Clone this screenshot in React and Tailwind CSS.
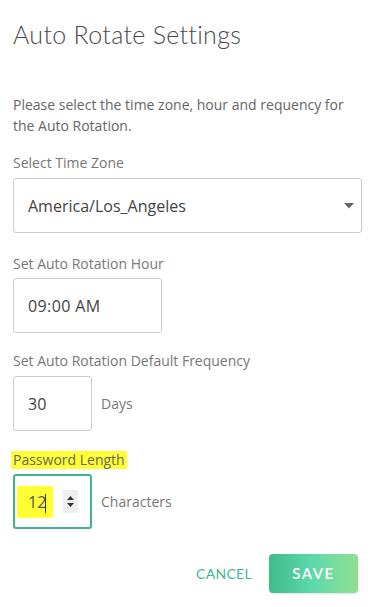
import React from 'react';

const Label = ({ children }) => (
  <div className="text-[14px] leading-[18px] text-[#777]">{children}</div>
);

export default function App() {
  return (
    <div className="w-[384px] h-[607px] bg-white font-['Open_Sans',sans-serif] text-[#555] pl-[13px] pr-[22px]">
      <h1 className="pt-[19px] text-[25px] leading-[30px] text-[#4a4a4a] font-['Lato',sans-serif] font-light tracking-[0.3px]">
        Auto Rotate Settings
      </h1>

      <p className="mt-[45px] text-[14px] leading-[21px] text-[#666]">
        Please select the time zone, hour and requency for the Auto Rotation.
      </p>

      <div className="mt-[18px]">
        <Label>Select Time Zone</Label>
        <div className="mt-[6px] h-[55px] w-[349px] border border-[#ccc] rounded-[3px] flex items-center justify-between pl-[14px] pr-[7px]">
          <span className="text-[16px] text-[#444]">America/Los_Angeles</span>
          <svg width="10" height="6" viewBox="0 0 10 6">
            <path d="M0 0h10L5 5.5z" fill="#666" />
          </svg>
        </div>
      </div>

      <div className="mt-[22px]">
        <Label>Set Auto Rotation Hour</Label>
        <div className="mt-[5px] h-[55px] w-[149px] border border-[#ccc] rounded-[3px] flex items-center pl-[14px]">
          <span className="text-[16px] text-[#444] tracking-[0.4px]">09:00 AM</span>
        </div>
      </div>

      <div className="mt-[19px]">
        <Label>Set Auto Rotation Default Frequency</Label>
        <div className="mt-[6px] flex items-center gap-[9px]">
          <div className="h-[55px] w-[79px] border border-[#ccc] rounded-[3px] flex items-center pl-[14px]">
            <span className="text-[16px] text-[#444]">30</span>
          </div>
          <span className="text-[14px] text-[#777]">Days</span>
        </div>
      </div>

      <div className="mt-[20px]">
        <div className="text-[14px] leading-[18px] text-[#666] bg-[#ffff33] w-fit -ml-[2px] px-[2px]">
          Password Length
        </div>
        <div className="mt-[5px] flex items-center gap-[9px]">
          <div className="h-[55px] w-[79px] border-2 border-[#3fb58f] rounded-[3px] flex items-center pl-[2px]">
            <span className="relative bg-[#ffff33] h-[32px] w-[36px] flex items-center pl-[11px] text-[16px] text-[#555] rounded-[2px]">
              12
              <span className="absolute left-[28px] top-[8px] w-px h-[19px] bg-[#333]" />
            </span>
            <div className="ml-[10px] w-[15px] h-[23px] bg-[#efefef] flex flex-col items-center justify-center gap-[3px]">
              <svg width="7" height="4" viewBox="0 0 7 4"><path d="M0 4h7L3.5 0z" fill="#333" /></svg>
              <svg width="7" height="4" viewBox="0 0 7 4"><path d="M0 0h7L3.5 4z" fill="#333" /></svg>
            </div>
          </div>
          <span className="text-[14px] text-[#777]">Characters</span>
        </div>
      </div>

      <div className="mt-[25px] flex items-center justify-end gap-[17px] pr-[4px]">
        <button className="text-[14px] text-[#3cb89a] font-['Lato',sans-serif] tracking-[0.3px]">CANCEL</button>
        <button className="h-[39px] w-[89px] rounded-[4px] bg-gradient-to-r from-[#3fbb8c] via-[#5dd9ac] to-[#8fe08f] text-white text-[15px] font-semibold tracking-[1.5px] font-['Lato',sans-serif] shadow-sm">
          SAVE
        </button>
      </div>
    </div>
  );
}
